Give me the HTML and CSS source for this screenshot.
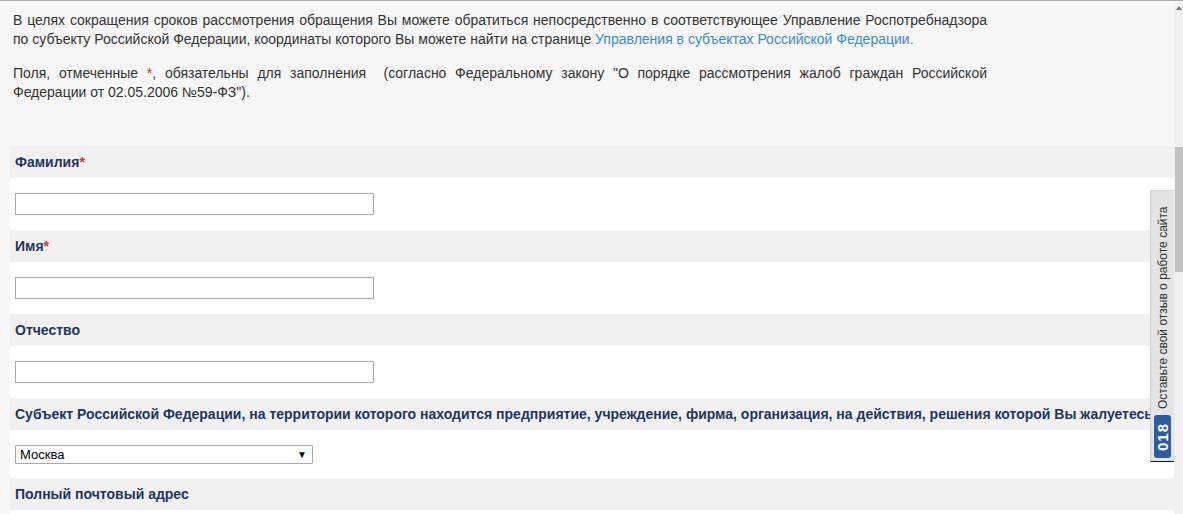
FILE: index.html
```html
<!DOCTYPE html>
<html lang="ru">
<head>
<meta charset="utf-8">
<title>Обращение</title>
<link rel="stylesheet" href="styles.css">
</head>
<body>
<div class="page">
  <div class="intro">
    <p>В целях сокращения сроков рассмотрения обращения Вы можете обратиться непосредственно в соответствующее Управление Роспотребнадзора по субъекту Российской Федерации, координаты которого Вы можете найти на странице <a href="#">Управления в субъектах Российской Федерации.</a></p>
    <p>Поля, отмеченные <span class="req">*</span>, обязательны для заполнения&nbsp; (согласно Федеральному закону "О порядке рассмотрения жалоб граждан Российской Федерации от 02.05.2006 №59-ФЗ").</p>
  </div>
  <form class="form">
    <div class="label-row">Фамилия<span class="req">*</span></div>
    <div class="field-row"><input class="text-input" type="text"></div>
    <div class="label-row">Имя<span class="req">*</span></div>
    <div class="field-row"><input class="text-input" type="text"></div>
    <div class="label-row">Отчество</div>
    <div class="field-row"><input class="text-input" type="text"></div>
    <div class="label-row">Субъект Российской Федерации, на территории которого находится предприятие, учреждение, фирма, организация, на действия, решения которой Вы жалуетесь</div>
    <div class="field-row select-row"><div class="select"><span>Москва</span><span class="arrow">▼</span></div></div>
    <div class="label-row">Полный почтовый адрес</div>
    <div class="field-row"><input class="text-input" type="text"></div>
  </form>
</div>
<div class="feedback">
  <div class="feedback-inner">
    <span class="badge">018</span>
    <span class="feedback-text">Оставьте свой отзыв о работе сайта</span>
  </div>
</div>
<div class="scrollbar">
  <div class="scroll-up"></div>
  <div class="scroll-thumb"></div>
</div>
</body>
</html>
```
FILE: styles.css
```css
html, body {
  margin: 0;
  padding: 0;
  height: 100%;
  overflow: hidden;
}
body {
  background: #f7f7f7;
  font-family: "Liberation Sans", Arial, sans-serif;
  color: #333;
  border-top: 1px solid #ababab;
  box-sizing: border-box;
}
.page {
  padding-right: 9px;
}
.intro {
  padding: 10px 0 0 13px;
  width: 974px;
}
.intro p {
  margin: 0 0 15px;
  font-size: 14px;
  line-height: 19px;
  text-align: justify;
}
.intro a {
  color: #3b8ccc;
  text-decoration: none;
}
.req {
  color: #e8262e;
}
.form {
  margin: 44px 0 0 10px;
  overflow: hidden;
}
.label-row {
  background: #f1f1f1;
  height: 32px;
  line-height: 32px;
  padding-left: 5px;
  font-size: 14px;
  font-weight: bold;
  color: #22355d;
  white-space: nowrap;
  overflow: hidden;
}
.field-row {
  background: #fff;
  padding: 15px 5px;
}
.text-input {
  display: block;
  box-sizing: border-box;
  width: 359px;
  height: 22px;
  margin: 0;
  border: 1px solid #a9a9a9;
  background: #fff;
  padding: 0 3px;
}
.select-row {
  padding: 15px 5px 14px;
}
.select {
  box-sizing: border-box;
  width: 298px;
  height: 19px;
  border: 1px solid #a9a9a9;
  border-radius: 1px;
  background: #fff;
  display: flex;
  justify-content: space-between;
  align-items: center;
  padding: 0 5px 0 4px;
  font-size: 13px;
  color: #000;
}
.arrow {
  font-size: 10px;
  color: #111;
}
.feedback {
  position: fixed;
  top: 190px;
  right: 9px;
  width: 24px;
  height: 272px;
  box-sizing: border-box;
  background: #e4e4e4;
  border-left: 1px solid #cdcdcd;
  border-top: 1px solid #d6d6d6;
  border-bottom: 1px solid #111;
  display: flex;
  justify-content: center;
}
.feedback-inner {
  writing-mode: vertical-rl;
  transform: rotate(180deg);
  display: flex;
  align-items: center;
  gap: 6px;
  padding-top: 3px;
}
.badge {
  background: #2e5d9e;
  color: #fff;
  font-weight: bold;
  font-size: 15px;
  letter-spacing: 1px;
  width: 17px;
  height: 43px;
  border-radius: 3px;
  display: flex;
  align-items: center;
  justify-content: center;
  box-sizing: border-box;
}
.feedback-text {
  font-size: 12px;
  color: #333;
  white-space: nowrap;
}
.scrollbar {
  position: fixed;
  top: 1px;
  right: 0;
  bottom: 0;
  width: 9px;
  background: #f1f1f1;
}
.scroll-up {
  margin: 5px auto 0;
  width: 0;
  height: 0;
  border-left: 3px solid transparent;
  border-right: 3px solid transparent;
  border-bottom: 4px solid #777;
}
.scroll-thumb {
  position: absolute;
  top: 146px;
  left: 1px;
  right: 0;
  height: 125px;
  background: #c1c1c1;
}
```
